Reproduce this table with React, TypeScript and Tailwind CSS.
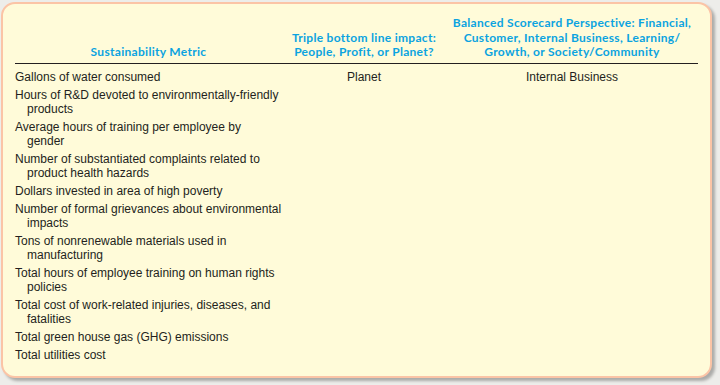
import React from "react";

type Row = {
  metric: string[];
  impact?: string;
  perspective?: string;
};

const rows: Row[] = [
  { metric: ["Gallons of water consumed"], impact: "Planet", perspective: "Internal Business" },
  { metric: ["Hours of R&D devoted to environmentally-friendly", "products"] },
  { metric: ["Average hours of training per employee by", "gender"] },
  { metric: ["Number of substantiated complaints related to", "product health hazards"] },
  { metric: ["Dollars invested in area of high poverty"] },
  { metric: ["Number of formal grievances about environmental", "impacts"] },
  { metric: ["Tons of nonrenewable materials used in", "manufacturing"] },
  { metric: ["Total hours of employee training on human rights", "policies"] },
  { metric: ["Total cost of work-related injuries, diseases, and", "fatalities"] },
  { metric: ["Total green house gas (GHG) emissions"] },
  { metric: ["Total utilities cost"] },
];

const headFont = { fontFamily: "Lato, 'Open Sans', sans-serif" };

export default function App() {
  return (
    <div className="w-[720px] h-[385px] bg-[#ededea] pl-[1px] pt-[2px]">
      <div
        className="w-[711px] h-[376px] rounded-[14px] border-2 border-[#fbc4a6] bg-[#fffbd9] shadow-[3px_3px_3px_rgba(0,0,0,0.28)] px-[12px] pt-[12px] text-[#231f20]"
        style={{ fontFamily: "'Liberation Sans', Arial, sans-serif" }}
      >
        {/* header */}
        <div
          className="grid grid-cols-[267px_164px_1fr] items-end border-b border-[#231f20] pb-[3px] text-[12px] tracking-[0.3px] leading-[14.5px] font-bold text-[#0ba3e0] text-center"
          style={headFont}
        >
          <div>Sustainability Metric</div>
          <div>
            Triple bottom line impact:
            <br />
            People, Profit, or Planet?
          </div>
          <div className="whitespace-nowrap">
            Balanced Scorecard Perspective: Financial,
            <br />
            Customer, Internal Business, Learning/
            <br />
            Growth, or Society/Community
          </div>
        </div>

        {/* body */}
        <div className="pt-[4px] text-[12px] leading-[14px]">
          {rows.map((r, i) => (
            <div key={i} className="grid grid-cols-[267px_164px_1fr] py-[2px]">
              <div className="whitespace-nowrap">
                {r.metric.map((line, j) => (
                  <div key={j} className={j > 0 ? "pl-[12px]" : ""}>
                    {line}
                  </div>
                ))}
              </div>
              <div className="text-center">{r.impact}</div>
              <div className="text-center">{r.perspective}</div>
            </div>
          ))}
        </div>
      </div>
    </div>
  );
}
